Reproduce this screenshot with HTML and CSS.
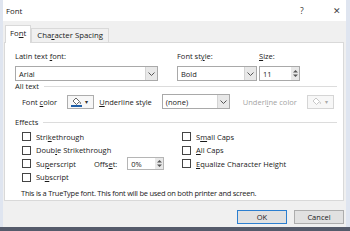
FILE: index.html
```html
<!DOCTYPE html>
<html>
<head>
  <meta charset="UTF-8">
  <title>Font</title>
  <link rel="stylesheet" href="styles.css">
</head>
<body>
  <div class="window">
    <div class="titlebar">
      <span class="title">Font</span>
      <span class="help">?</span>
      <span class="close">&#x2715;</span>
    </div>

    <div class="tabs">
      <div class="tab active">Fo<u>n</u>t</div>
      <div class="tab">Cha<u>r</u>acter Spacing</div>
    </div>

    <div class="panel">
      <div class="top-row">
        <div class="field">
          <label>Latin text <u>f</u>ont:</label>
          <div class="combo"><span>Arial</span><span class="drop"><svg width="7" height="4" viewBox="0 0 7 4"><path d="M0.5 0.5 L3.5 3.5 L6.5 0.5" fill="none" stroke="#555" stroke-width="1"/></svg></span></div>
        </div>
        <div class="field">
          <label>Font st<u>y</u>le:</label>
          <div class="combo"><span>Bold</span><span class="drop"><svg width="7" height="4" viewBox="0 0 7 4"><path d="M0.5 0.5 L3.5 3.5 L6.5 0.5" fill="none" stroke="#555" stroke-width="1"/></svg></span></div>
        </div>
        <div class="field">
          <label><u>S</u>ize:</label>
          <div class="combo spin"><span>11</span><span class="spinner"><svg width="5" height="9" viewBox="0 0 5 9"><path d="M0 3.5 L2.5 1 L5 3.5 Z M0 5.5 L2.5 8 L5 5.5 Z" fill="#555"/></svg></span></div>
        </div>
      </div>

      <div class="section">All text</div>
      <div class="alltext-row">
        <span class="lbl">Font <u>c</u>olor</span>
        <span class="color-btn">
          <svg width="11" height="10" viewBox="0 0 11 10"><path d="M2 4 L5 1 L8.5 4.5 L5.5 7.5 Z" fill="#fff" stroke="#444" stroke-width="0.8"/><path d="M9 5 Q10 6.5 9 7" fill="none" stroke="#444" stroke-width="0.8"/><rect x="0" y="8" width="11" height="2" fill="#1f5fa8"/></svg>
          <span class="caret">&#9662;</span>
        </span>
        <span class="lbl ul-style"><u>U</u>nderline style</span>
        <div class="combo ul-combo"><span>(none)</span><span class="drop"><svg width="7" height="4" viewBox="0 0 7 4"><path d="M0.5 0.5 L3.5 3.5 L6.5 0.5" fill="none" stroke="#555" stroke-width="1"/></svg></span></div>
        <span class="lbl disabled ul-color">Underl<u>i</u>ne color</span>
        <span class="color-btn disabled-btn">
          <svg width="11" height="10" viewBox="0 0 11 10"><path d="M2 4 L5 1 L8.5 4.5 L5.5 7.5 Z" fill="#fff" stroke="#bbb" stroke-width="0.8"/><path d="M9 5 Q10 6.5 9 7" fill="none" stroke="#bbb" stroke-width="0.8"/></svg>
          <span class="caret">&#9662;</span>
        </span>
      </div>

      <div class="section effects">Effects</div>
      <div class="effects-grid">
        <div class="check"><span class="box"></span>Stri<u>k</u>ethrough</div>
        <div class="check"><span class="box"></span>S<u>m</u>all Caps</div>
        <div class="check"><span class="box"></span>Doub<u>l</u>e Strikethrough</div>
        <div class="check"><span class="box"></span><u>A</u>ll Caps</div>
        <div class="check"><span class="box"></span>Su<u>p</u>erscript
          <span class="offset">Offs<u>e</u>t:</span>
          <span class="combo spin offset-box"><span>0%</span><span class="spinner"><svg width="5" height="9" viewBox="0 0 5 9"><path d="M0 3.5 L2.5 1 L5 3.5 Z M0 5.5 L2.5 8 L5 5.5 Z" fill="#555"/></svg></span></span>
        </div>
        <div class="check"><span class="box"></span><u>E</u>qualize Character Height</div>
        <div class="check"><span class="box"></span>Su<u>b</u>script</div>
      </div>

      <p class="note">This is a TrueType font. This font will be used on both printer and screen.</p>
    </div>

    <div class="buttons">
      <button class="btn default">OK</button>
      <button class="btn">Cancel</button>
    </div>
  </div>
</body>
</html>
```

FILE: styles.css
```css
* {
  box-sizing: border-box;
}

body {
  margin: 0;
  width: 350px;
  height: 231px;
  overflow: hidden;
  background: #555b6b;
  font-family: "Open Sans", "Noto Sans", sans-serif;
  font-size: 7.5px;
  color: #1a1a1a;
  white-space: nowrap;
}

u {
  text-decoration-thickness: 0.5px;
  text-underline-offset: 1px;
}

.window {
  height: 227px;
  background: #f0f0f0;
  border-left: 3px solid #dfe5f0;
  border-right: 4px solid #dfe5f0;
}

.titlebar {
  display: flex;
  align-items: center;
  height: 21px;
  background: #fff;
  padding-left: 3px;
  font-size: 7.8px;
}

.title {
  flex: 1;
}

.help {
  width: 33px;
  font-size: 8.5px;
  color: #333;
}

.close {
  width: 13px;
  font-size: 8.5px;
  color: #444;
}

.tabs {
  display: flex;
  align-items: flex-end;
  height: 21px;
  padding-left: 2px;
}

.tab {
  height: 14px;
  padding: 0 5px;
  border: 1px solid #d9d9d9;
  border-bottom: none;
  background: #f0f0f0;
  line-height: 13px;
  font-size: 7.8px;
}

.tab.active {
  height: 18px;
  background: #fff;
  position: relative;
  top: 1px;
  line-height: 14px;
  padding: 0 4px;
}

.panel {
  height: 159px;
  margin-left: 1px;
  width: 340px;
  background: #fff;
  border: 1px solid #d9d9d9;
  padding: 8px 6px 0 10px;
}

.top-row {
  display: grid;
  grid-template-columns: 143px 80px 41px;
  column-gap: 19px;
}

.top-row .field:nth-child(3) {
  margin-left: -17px;
  width: 41px;
}

.field label {
  display: block;
  height: 11px;
  line-height: 11px;
  margin-bottom: 4px;
}

.combo {
  display: flex;
  align-items: center;
  height: 15px;
  border: 1px solid #a9a9a9;
  background: #fff;
  padding-left: 3px;
}

.combo > span:first-child {
  flex: 1;
}

.drop {
  display: flex;
  align-items: center;
  justify-content: center;
  width: 12px;
  height: 13px;
  background: #e8e8e8;
  border-left: 1px solid #d4d4d4;
}

.spinner {
  display: flex;
  align-items: center;
  justify-content: center;
  width: 8px;
  height: 13px;
  background: #e8e8e8;
}

.section {
  display: flex;
  align-items: center;
  height: 10px;
}

.section::after {
  content: "";
  flex: 1;
  height: 1px;
  background: #dcdcdc;
  margin-left: 5px;
}

.alltext-row {
  display: flex;
  align-items: center;
  height: 15px;
  margin-top: 3px;
  padding-left: 7px;
}

.lbl {
  flex: none;
}

.color-btn {
  flex: none;
  display: flex;
  align-items: center;
  gap: 3px;
  height: 14px;
  width: 27px;
  padding-left: 3px;
  border: 1px solid #adadad;
  background: #f7f7f7;
  margin-left: 10px;
}

.caret {
  font-size: 6px;
  color: #333;
}

.ul-style {
  margin-left: 5px;
}

.ul-combo {
  flex: none;
  width: 68px;
  margin-left: 10px;
}

.ul-color {
  margin-left: 13px;
}

.disabled {
  color: #a3a3a3;
}

.disabled-btn {
  margin-left: 10px;
  border-color: #d5d5d5;
}

.disabled-btn .caret {
  color: #aaa;
}

.effects {
  margin-top: 8px;
}

.effects-grid {
  display: grid;
  grid-template-columns: 160px 1fr;
  grid-auto-rows: 13.5px;
  margin-top: 3px;
  padding-left: 7px;
}

.check {
  display: flex;
  align-items: center;
}

.box {
  width: 9px;
  height: 9px;
  border: 1px solid #444;
  background: #fff;
  margin-right: 5px;
}

.offset {
  margin-left: 18px;
}

.offset-box {
  width: 37px;
  height: 13px;
  margin-left: 10px;
  border-color: #b5b5b5;
}

.offset-box .spinner {
  height: 11px;
}

.note {
  margin: 4px 0 0 6px;
  height: 10px;
  line-height: 10px;
  letter-spacing: -0.25px;
}

.buttons {
  display: flex;
  justify-content: flex-end;
  gap: 7px;
  padding: 9px 2px 0 0;
}

.btn {
  width: 50px;
  height: 14px;
  padding: 0;
  border: 1px solid #adadad;
  background: #e1e1e1;
  font-family: "Open Sans", "Noto Sans", sans-serif;
  font-size: 7.5px;
  color: #1a1a1a;
}

.btn.default {
  border-color: #2c7fd0;
}
```
